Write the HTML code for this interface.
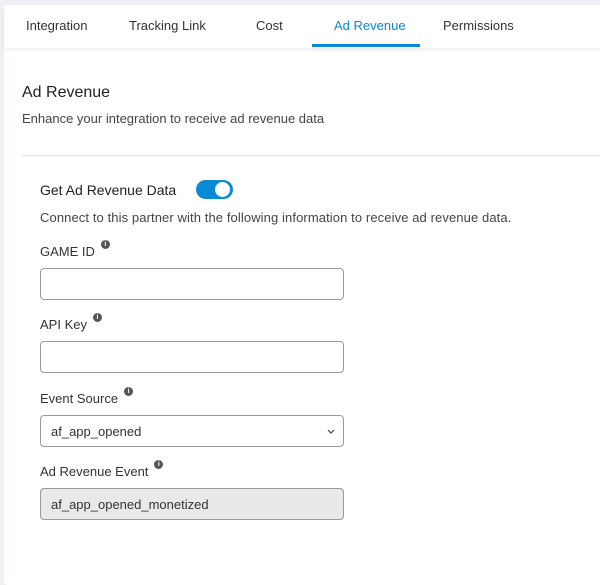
<!DOCTYPE html>
<html><head><style>
*{box-sizing:border-box;margin:0;padding:0}
body{width:600px;height:576px;background:#eef0f4;font-family:"Liberation Sans",sans-serif;color:#333;position:relative;overflow:hidden}
.card{position:absolute;left:4px;top:5px;width:600px;height:580px;background:#fff;border-radius:4px}
.tabs{position:absolute;left:4px;top:5px;width:600px;height:43px;background:#fff;box-shadow:0 2px 3px rgba(0,0,0,.08);border-radius:4px 0 0 0}
.tab{position:absolute;top:18px;font-size:13px;color:#333}
.ul{position:absolute;left:312px;top:44px;width:108px;height:3px;background:#0a8ad6}
.t{position:absolute;white-space:nowrap}
.hr{position:absolute;left:22px;top:155px;width:578px;height:1px;background:#ddd}
.tog{position:absolute;left:196px;top:180px;width:37px;height:19px;border-radius:10px;background:#0a8ad6}
.tog:after{content:"";position:absolute;right:3px;top:2px;width:15px;height:15px;border-radius:50%;background:#fff}
.in{position:absolute;left:40px;width:304px;height:32px;border:1px solid #9a9a9a;border-radius:4px;background:#fff;font-size:13px;padding:8px 0 0 10px;color:#333}
.i{display:inline-block;width:9px;height:9px;border-radius:50%;background:#555;color:#fff;font-size:7px;line-height:9px;text-align:center;font-weight:bold;vertical-align:top;margin-left:6px;margin-top:-4px}
.lab{font-size:13px;color:#333}
</style></head><body>
<div class="card"></div>
<div class="tabs"></div>
<div class="tab" style="left:26px">Integration</div>
<div class="tab" style="left:129px">Tracking Link</div>
<div class="tab" style="left:256px">Cost</div>
<div class="tab" style="left:334px;color:#0a8ad6">Ad Revenue</div>
<div class="tab" style="left:443px">Permissions</div>
<div class="ul"></div>
<div class="t" style="left:22px;top:84px;font-size:16px;color:#222">Ad Revenue</div>
<div class="t" style="left:22px;top:111px;font-size:13px;color:#444">Enhance your integration to receive ad revenue data</div>
<div class="hr"></div>
<div class="t" style="left:40px;top:182px;font-size:14px;color:#222">Get Ad Revenue Data</div>
<div class="tog"></div>
<div class="t" style="left:40px;top:210px;font-size:13px;color:#444;letter-spacing:0.1px">Connect to this partner with the following information to receive ad revenue data.</div>
<div class="t lab" style="left:40px;top:244px">GAME ID<span class="i">i</span></div>
<div class="in" style="top:268px"></div>
<div class="t lab" style="left:40px;top:317px">API Key<span class="i">i</span></div>
<div class="in" style="top:341px"></div>
<div class="t lab" style="left:40px;top:391px">Event Source<span class="i">i</span></div>
<div class="in" style="top:415px">af_app_opened<svg style="position:absolute;right:8px;top:13px" width="8" height="5" viewBox="0 0 8 5"><path d="M1 1l3 3 3-3" stroke="#444" fill="none" stroke-width="1.2"/></svg></div>
<div class="t lab" style="left:40px;top:464px">Ad Revenue Event<span class="i">i</span></div>
<div class="in" style="top:488px;background:#e9e9e9">af_app_opened_monetized</div>
</body></html>
